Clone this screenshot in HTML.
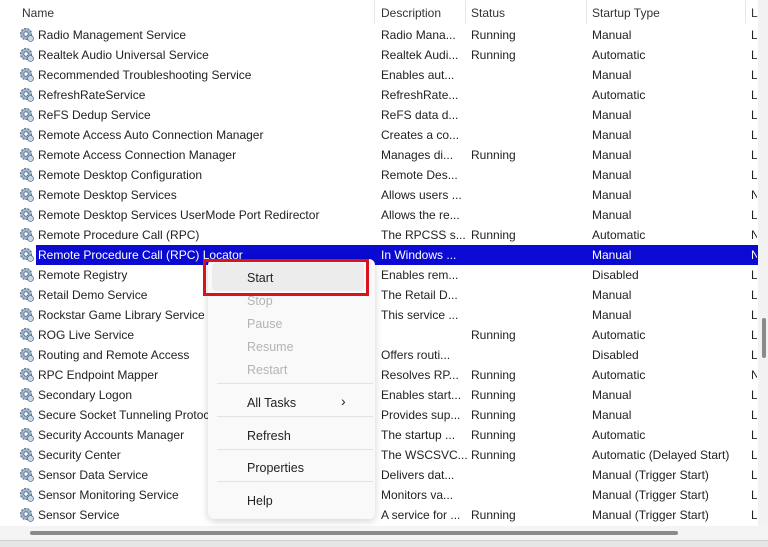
<!DOCTYPE html><html><head><style>
body{margin:0;width:768px;height:546px;overflow:hidden;background:#fff;font-family:"Liberation Sans",sans-serif;font-size:12px;color:#222;position:relative}
.h{position:absolute;top:0;left:0;width:758px;height:24px;background:#fff}
.h span{position:absolute;top:6px;color:#333}
.sep{position:absolute;top:0;height:24px;border-left:1px solid #e8e8e8}
.r{position:absolute;left:0;width:758px;height:20px}
.r span{position:absolute;top:3px;white-space:nowrap;overflow:hidden}
.sel{background:#0a0ad2;color:#fff}
.ic{position:absolute;left:19px;top:2px;width:15px;height:15px}
.m{position:absolute;left:208px;top:259px;width:167px;height:260px;background:#f9f9f9;border-radius:6px;box-shadow:0 2px 8px rgba(0,0,0,.18)}
.mi{position:absolute;left:39px;font-size:12.5px;color:#222}
.dis{color:#b4b4b4}
.ms{position:absolute;left:9px;width:156px;border-top:1px solid #e2e2e2}
</style></head><body>
<div class="h"><span style="left:22px">Name</span><span style="left:381px">Description</span><span style="left:471px">Status</span><span style="left:592px">Startup Type</span><span style="left:751px">L</span>
<div class="sep" style="left:374px"></div><div class="sep" style="left:465px"></div><div class="sep" style="left:586px"></div><div class="sep" style="left:745px"></div>
<div style="position:absolute;left:190px;top:-6px;color:#999;font-size:11px">^</div></div>
<div id="rows"></div>
<div style="position:absolute;left:758px;top:0;width:10px;height:530px;background:#f2f2f2"></div>
<div style="position:absolute;left:762px;top:318px;width:4px;height:40px;background:#8a8a8a;border-radius:2px"></div>
<div style="position:absolute;left:0;top:526px;width:768px;height:14px;background:#f4f4f4"></div>
<div style="position:absolute;left:30px;top:531px;width:648px;height:4px;background:#8a8a8a;border-radius:2px"></div>
<div style="position:absolute;left:0;top:540px;width:768px;height:6px;background:#e6e6e6;border-top:1px solid #cfcfcf"></div>
<div class="m">
<div style="position:absolute;left:4px;top:4px;width:152px;height:28px;background:#ececec;border-radius:4px"></div>
<div class="mi" style="top:12px">Start</div>
<div class="mi dis" style="top:35px">Stop</div>
<div class="mi dis" style="top:58px">Pause</div>
<div class="mi dis" style="top:81px">Resume</div>
<div class="mi dis" style="top:104px">Restart</div>
<div class="ms" style="top:124px"></div>
<div class="mi" style="top:137px">All Tasks</div><div class="mi" style="top:134px;left:133px;font-size:14px">›</div>
<div class="ms" style="top:157px"></div>
<div class="mi" style="top:170px">Refresh</div>
<div class="ms" style="top:190px"></div>
<div class="mi" style="top:202px">Properties</div>
<div class="ms" style="top:222px"></div>
<div class="mi" style="top:235px">Help</div>
</div>
<div style="position:absolute;left:203px;top:259px;width:160px;height:31px;border:3px solid #d8131b"></div>
<script>
var d=[["Radio Management Service","Radio Mana...","Running","Manual","L"],
["Realtek Audio Universal Service","Realtek Audi...","Running","Automatic","L"],
["Recommended Troubleshooting Service","Enables aut...","","Manual","L"],
["RefreshRateService","RefreshRate...","","Automatic","L"],
["ReFS Dedup Service","ReFS data d...","","Manual","L"],
["Remote Access Auto Connection Manager","Creates a co...","","Manual","L"],
["Remote Access Connection Manager","Manages di...","Running","Manual","L"],
["Remote Desktop Configuration","Remote Des...","","Manual","L"],
["Remote Desktop Services","Allows users ...","","Manual","N"],
["Remote Desktop Services UserMode Port Redirector","Allows the re...","","Manual","L"],
["Remote Procedure Call (RPC)","The RPCSS s...","Running","Automatic","N"],
["Remote Procedure Call (RPC) Locator","In Windows ...","","Manual","N"],
["Remote Registry","Enables rem...","","Disabled","L"],
["Retail Demo Service","The Retail D...","","Manual","L"],
["Rockstar Game Library Service","This service ...","","Manual","L"],
["ROG Live Service","","Running","Automatic","L"],
["Routing and Remote Access","Offers routi...","","Disabled","L"],
["RPC Endpoint Mapper","Resolves RP...","Running","Automatic","N"],
["Secondary Logon","Enables start...","Running","Manual","L"],
["Secure Socket Tunneling Protocol Service","Provides sup...","Running","Manual","L"],
["Security Accounts Manager","The startup ...","Running","Automatic","L"],
["Security Center","The WSCSVC...","Running","Automatic (Delayed Start)","L"],
["Sensor Data Service","Delivers dat...","","Manual (Trigger Start)","L"],
["Sensor Monitoring Service","Monitors va...","","Manual (Trigger Start)","L"],
["Sensor Service","A service for ...","Running","Manual (Trigger Start)","L"]];
var h="";d.forEach(function(r,i){var y=25+i*20;var s=i==11;
h+='<div class="r'+(s?' sel':'')+'" style="top:'+y+'px'+(s?';left:36px;width:722px':'')+'">'+
'<svg class="ic" style="left:'+(s?-17:19)+'px" viewBox="0 0 15 15"><circle cx="7" cy="7" r="5.5" fill="#9fb3c8" stroke="#5b7592" stroke-width="1.2" stroke-dasharray="2 1.4"/><circle cx="7" cy="7" r="2.2" fill="#fff" stroke="#5b7592"/><circle cx="11.5" cy="11.5" r="3" fill="#c9d6e3" stroke="#5b7592" stroke-width=".8"/></svg>'+
'<span style="left:'+(s?2:38)+'px;width:'+(i==19?170:330)+'px">'+r[0]+'</span><span style="left:'+(s?345:381)+'px;width:86px">'+r[1]+'</span><span style="left:'+(s?435:471)+'px">'+r[2]+'</span><span style="left:'+(s?556:592)+'px">'+r[3]+'</span><span style="left:'+(s?715:751)+'px;width:6px">'+r[4]+'</span></div>';});
document.getElementById("rows").innerHTML=h;
</script>
</body></html>
